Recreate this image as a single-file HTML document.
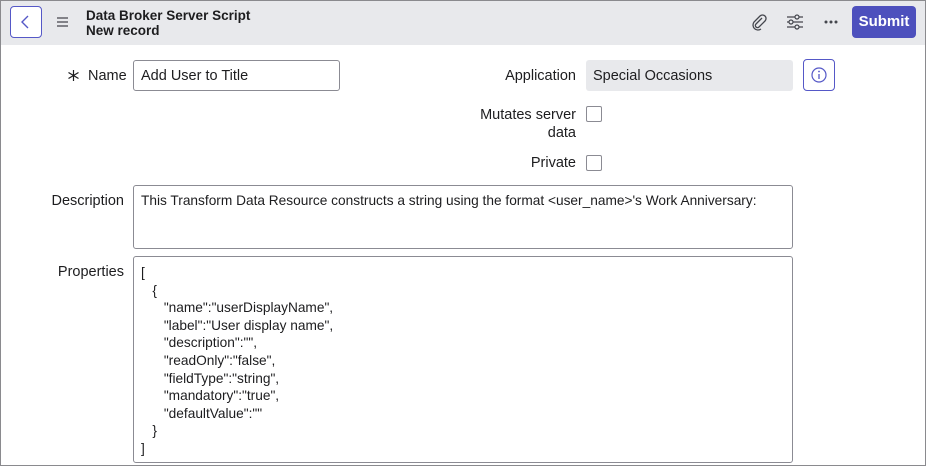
<!DOCTYPE html>
<html><head><style>
*{box-sizing:border-box;margin:0;padding:0}
body{width:926px;height:466px;overflow:hidden;background:#fff;font-family:"Liberation Sans",sans-serif;color:#1d1d1f;position:relative}
.frame{position:absolute;left:0;top:0;width:926px;height:466px;border:1px solid #8a8a8e}
.hdr{position:absolute;left:1px;top:1px;width:924px;height:44px;background:#e8e9ec}
.a{position:absolute}
.lbl{position:absolute;font-size:14.5px;text-align:right;color:#1d1d1f}
.box{position:absolute;border:1px solid #8b8b93;border-radius:3px;background:#fff}
.cb{position:absolute;width:16px;height:16px;border:1px solid #8b8b93;border-radius:2px}
pre{font-family:"Liberation Sans",sans-serif;font-size:13.7px;line-height:17.6px}
</style></head><body>
<div class="frame"></div>
<div class="hdr"></div>
<div class="a" style="left:10px;top:6px;width:32px;height:32px;border:1px solid #5558c7;border-radius:4px;background:#fff"></div>
<svg class="a" style="left:19px;top:14px" width="14" height="16"><path d="M9 2 L3 8 L9 14" stroke="#5558c7" stroke-width="1.4" fill="none"/></svg>
<svg class="a" style="left:56px;top:16px" width="13" height="12"><path d="M1 2H12M1 6H12M1 10H12" stroke="#44464d" stroke-width="1.3"/></svg>
<div class="a" style="left:86px;top:8px;font-size:13.5px;font-weight:bold;line-height:15px">Data Broker Server Script<br>New record</div>
<svg class="a" style="left:751px;top:13px" width="16" height="18"><path d="M11 5 L5 11 a2 2 0 0 0 3 3 L14 8 a3.5 3.5 0 0 0 -5 -5 L3 9 a5 5 0 0 0 7 7" stroke="#44464d" stroke-width="1.3" fill="none"/></svg>
<svg class="a" style="left:786px;top:14px" width="18" height="16"><path d="M1 3H17M1 8H17M1 13H17" stroke="#44464d" stroke-width="1.2"/><circle cx="11" cy="3" r="2" fill="#e8e9ec" stroke="#44464d" stroke-width="1.2"/><circle cx="5" cy="8" r="2" fill="#e8e9ec" stroke="#44464d" stroke-width="1.2"/><circle cx="11" cy="13" r="2" fill="#e8e9ec" stroke="#44464d" stroke-width="1.2"/></svg>
<svg class="a" style="left:824px;top:19px" width="14" height="6"><circle cx="2" cy="3" r="1.5" fill="#44464d"/><circle cx="7" cy="3" r="1.5" fill="#44464d"/><circle cx="12" cy="3" r="1.5" fill="#44464d"/></svg>
<div class="a" style="left:852px;top:6px;width:64px;height:32px;background:#4d50bd;border-radius:4px;color:#fff;font-weight:bold;font-size:15px;text-align:center;line-height:32px">Submit</div>

<svg class="a" style="left:67px;top:69px" width="13" height="13"><path d="M6.5 1V12M1.5 3.5L11.5 9.5M1.5 9.5L11.5 3.5" stroke="#1d1d1f" stroke-width="1.2"/></svg>
<div class="lbl" style="left:88px;top:68px">Name</div>
<div class="box" style="left:133px;top:60px;width:207px;height:31px"></div>
<div class="a" style="left:141px;top:68px;font-size:14.5px">Add User to Title</div>

<div class="lbl" style="left:400px;width:176px;top:68px">Application</div>
<div class="a" style="left:586px;top:60px;width:207px;height:31px;background:#e8e9ec;border-radius:3px"></div>
<div class="a" style="left:593px;top:68px;font-size:14.5px">Special Occasions</div>
<div class="a" style="left:803px;top:59px;width:32px;height:32px;border:1px solid #5558c7;border-radius:4px"></div>
<svg class="a" style="left:810px;top:66px" width="18" height="18"><circle cx="9" cy="9" r="7" stroke="#5558c7" stroke-width="1.2" fill="none"/><path d="M9 8V13" stroke="#5558c7" stroke-width="1.3"/><circle cx="9" cy="5.5" r=".9" fill="#5558c7"/></svg>

<div class="lbl" style="left:400px;width:176px;top:106px;line-height:18px">Mutates server<br>data</div>
<div class="cb" style="left:586px;top:106px"></div>
<div class="lbl" style="left:400px;width:176px;top:155px">Private</div>
<div class="cb" style="left:586px;top:155px"></div>

<div class="lbl" style="left:20px;width:104px;top:193px">Description</div>
<div class="box" style="left:133px;top:185px;width:660px;height:64px"></div>
<div class="a" style="left:141px;top:193px;font-size:13.7px">This Transform Data Resource constructs a string using the format &lt;user_name&gt;'s Work Anniversary:</div>

<div class="lbl" style="left:20px;width:104px;top:264px">Properties</div>
<div class="box" style="left:133px;top:256px;width:660px;height:207px"></div>
<pre class="a" style="left:141px;top:264px">[
   {
      "name":"userDisplayName",
      "label":"User display name",
      "description":"",
      "readOnly":"false",
      "fieldType":"string",
      "mandatory":"true",
      "defaultValue":""
   }
]</pre>
</body></html>
